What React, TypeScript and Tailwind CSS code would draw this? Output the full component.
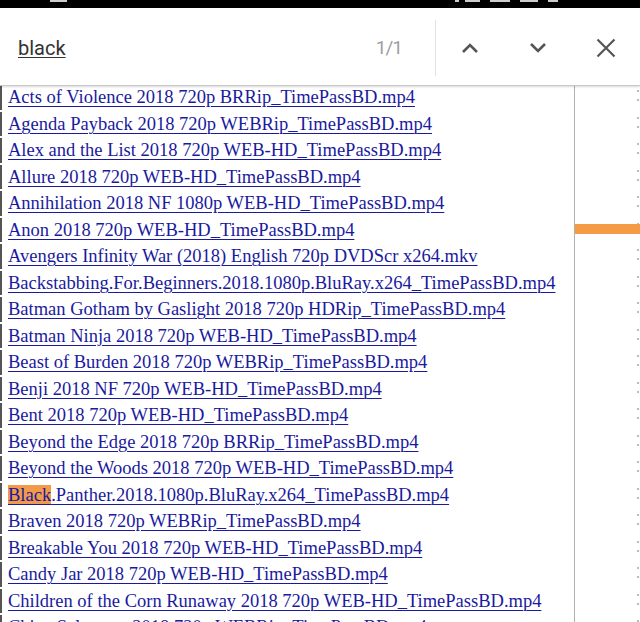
import React from 'react';

const files: string[] = [
  'Acts of Violence 2018 720p BRRip_TimePassBD.mp4',
  'Agenda Payback 2018 720p WEBRip_TimePassBD.mp4',
  'Alex and the List 2018 720p WEB-HD_TimePassBD.mp4',
  'Allure 2018 720p WEB-HD_TimePassBD.mp4',
  'Annihilation 2018 NF 1080p WEB-HD_TimePassBD.mp4',
  'Anon 2018 720p WEB-HD_TimePassBD.mp4',
  'Avengers Infinity War (2018) English 720p DVDScr x264.mkv',
  'Backstabbing.For.Beginners.2018.1080p.BluRay.x264_TimePassBD.mp4',
  'Batman Gotham by Gaslight 2018 720p HDRip_TimePassBD.mp4',
  'Batman Ninja 2018 720p WEB-HD_TimePassBD.mp4',
  'Beast of Burden 2018 720p WEBRip_TimePassBD.mp4',
  'Benji 2018 NF 720p WEB-HD_TimePassBD.mp4',
  'Bent 2018 720p WEB-HD_TimePassBD.mp4',
  'Beyond the Edge 2018 720p BRRip_TimePassBD.mp4',
  'Beyond the Woods 2018 720p WEB-HD_TimePassBD.mp4',
  'Black.Panther.2018.1080p.BluRay.x264_TimePassBD.mp4',
  'Braven 2018 720p WEBRip_TimePassBD.mp4',
  'Breakable You 2018 720p WEB-HD_TimePassBD.mp4',
  'Candy Jar 2018 720p WEB-HD_TimePassBD.mp4',
  'Children of the Corn Runaway 2018 720p WEB-HD_TimePassBD.mp4',
  'China Salesman 2018 720p WEBRip_TimePassBD.mp4',
];

const FileName: React.FC<{ name: string }> = ({ name }) => {
  if (name.startsWith('Black')) {
    return (
      <>
        <span className="bg-[#f29a4a]">Black</span>
        {name.slice(5)}
      </>
    );
  }
  return <>{name}</>;
};

const FindBar: React.FC = () => (
  <div className="relative z-10 flex h-[78px] items-center pt-[3px] bg-white border-b border-[#c8c8c8] shadow-[0_1px_2px_rgba(0,0,0,0.15)] font-['Roboto',sans-serif]">
    <span className="ml-[18px] text-[20px] text-[#333] underline decoration-1 underline-offset-2">black</span>
    <span className="ml-auto mr-[33px] text-[19px] tracking-[-1px] text-[#9e9e9e]">1/1</span>
    <div className="h-[56px] w-px bg-[#e2e2e2]" />
    <div className="flex w-[68px] justify-center">
      <svg width="18" height="12" viewBox="0 0 18 12">
        <path d="M2 10 L9 3 L16 10" fill="none" stroke="#555" strokeWidth="2.6" />
      </svg>
    </div>
    <div className="flex w-[68px] justify-center">
      <svg width="18" height="12" viewBox="0 0 18 12">
        <path d="M2 2 L9 9 L16 2" fill="none" stroke="#555" strokeWidth="2.6" />
      </svg>
    </div>
    <div className="flex w-[68px] justify-center">
      <svg width="20" height="20" viewBox="0 0 20 20">
        <path d="M1.5 1.5 L18.5 18.5 M18.5 1.5 L1.5 18.5" fill="none" stroke="#555" strokeWidth="2.2" />
      </svg>
    </div>
  </div>
);

export default function App() {
  return (
    <div className="w-[640px] h-[622px] overflow-hidden bg-white">
      {/* status bar, icons cut off at the top */}
      <div className="flex h-[8px] items-start bg-black">
        <div className="ml-[50px] h-[2px] w-[17px] bg-[#ccc]" />
        <div className="ml-[388px] h-[2px] w-[4px] bg-[#ccc]" />
        <div className="ml-[6px] h-[2px] w-[15px] bg-[#ccc]" />
        <div className="ml-[10px] h-[2px] w-[20px] bg-[#ccc]" />
        <div className="ml-[10px] h-[2px] w-[18px] bg-[#ccc]" />
        <div className="ml-[10px] h-[2px] w-[10px] bg-[#ccc]" />
      </div>

      <FindBar />

      <div className="flex mt-[-2px]">
        <div className="w-[575px] border-r border-[#b0b0b0] font-['Liberation_Serif',serif] text-[18.5px]">
          {files.map((f) => (
            <div key={f} className="h-[26.5px] py-[1px]">
              <div className="h-full border-l-2 border-[#555] pl-[6px] leading-[24.5px] whitespace-nowrap overflow-hidden">
                <a className="text-[#1a1a9e] underline decoration-1 underline-offset-[3px]">
                  <FileName name={f} />
                </a>
              </div>
            </div>
          ))}
        </div>
        <div className="relative flex-1">
          {files.map((f) => (
            <div key={f} className="flex h-[26.5px] flex-col items-end gap-[7px] pt-[6px] pr-[1px]">
              <span className="h-[2px] w-[2px] bg-[#bbb]" />
              <span className="h-[2px] w-[2px] bg-[#bbb]" />
            </div>
          ))}
          {/* find-result marker */}
          <div className="absolute left-0 right-0 top-[140px] h-[10px] bg-[#f59a45]" />
        </div>
      </div>
    </div>
  );
}
